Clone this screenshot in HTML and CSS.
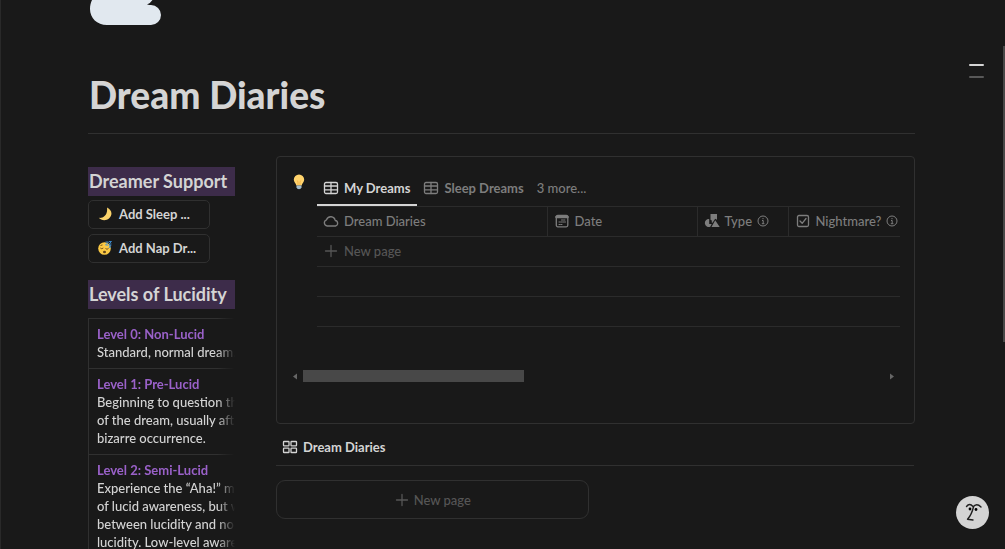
FILE: index.html
```html
<!DOCTYPE html>
<html lang="en">
<head>
<meta charset="utf-8">
<title>Dream Diaries</title>
<link rel="stylesheet" href="styles.css">
</head>
<body>
<main class="page">
  <svg class="page-icon" viewBox="0 0 72 72" aria-hidden="true"><path d="M17 72C7 72 0 65 0 56C0 48 4 42 10 40Q14 26 30 26Q52 28 63 46Q61 50 57 51.500Q60 52 61 52A10 10 0 0 1 61 72Z" fill="#e1e8ef"/></svg>
  <h1 class="title">Dream Diaries</h1>
  <div class="columns">
    <aside class="side">
      <h2 class="side-heading">Dreamer Support</h2>
      <button class="action" type="button">
        <svg class="emoji" viewBox="0 0 14 14" aria-hidden="true"><path d="M9 .5C14 3 15 8 11 11.500C8 14 3 13.500 .8 10.800C5 11.500 10 8 9 .5Z" fill="#fbd36b"/></svg>
        <span>Add Sleep ...</span>
      </button>
      <button class="action" type="button">
        <svg class="emoji" viewBox="0 0 14 14" aria-hidden="true"><circle cx="6.500" cy="7.500" r="6.300" fill="#fbc944"/><path d="M2.300 7q1.500 1.500 3 0M7.500 7.500q1.500 1.500 3 0M2.500 4.500l2-.6" fill="none" stroke="#65471b" stroke-width=".9"/><ellipse cx="6.500" cy="11" rx="1.500" ry="1.300" fill="#65471b"/><path d="M7.500 1h3l-3 3h3M11 .5h2.500L11 3h2.500M11 4.300h2l-2 2h2" fill="none" stroke="#3f91d8" stroke-width=".9"/></svg>
        <span>Add Nap Dr...</span>
      </button>
      <h2 class="side-heading levels-heading">Levels of Lucidity</h2>
      <div class="levels-clip">
        <table class="levels">
          <tr><td><b>Level 0: Non-Lucid</b><br>Standard, normal dream.</td></tr>
          <tr><td><b>Level 1: Pre-Lucid</b><br>Beginning to question the<br>of the dream, usually after<br>bizarre occurrence.</td></tr>
          <tr><td><b>Level 2: Semi-Lucid</b><br>Experience the “Aha!” mo<br>of lucid awareness, but w<br>between lucidity and nor<br>lucidity. Low-level aware</td></tr>
        </table>
      </div>
    </aside>
    <div class="content">
      <section class="callout">
        <svg class="bulb" viewBox="0 0 12 16" aria-hidden="true"><path d="M6 .5A5.200 5.200 0 0 0 .8 5.700C.8 8.200 3 9 3.300 11.500H8.700C9 9 11.200 8.200 11.200 5.700A5.200 5.200 0 0 0 6 .5Z" fill="#ffd36c"/><path d="M5 11V7.500L3.800 6.500M7 11V7.500L8.200 6.500" fill="none" stroke="#f2a93b" stroke-width=".7"/><path d="M3.500 11.500h5v2q-.5 1.700-2.500 1.700t-2.500-1.700Z" fill="#a4bdcb"/></svg>
        <div class="database">
          <nav class="tabs">
            <button class="tab active" type="button"><svg class="icon" viewBox="0 0 16 16" aria-hidden="true"><rect x="1.500" y="2.500" width="13" height="11" rx="1.500"/><path d="M1.500 6h13M1.500 9.800h13M8 2.500v11"/></svg>My Dreams</button>
            <button class="tab" type="button"><svg class="icon" viewBox="0 0 16 16" aria-hidden="true"><rect x="1.500" y="2.500" width="13" height="11" rx="1.500"/><path d="M1.500 6h13M1.500 9.800h13M8 2.500v11"/></svg>Sleep Dreams</button>
            <button class="tab more" type="button">3 more...</button>
          </nav>
          <table class="grid">
            <colgroup><col class="col-name"><col class="col-date"><col class="col-type"><col></colgroup>
            <thead><tr>
              <th><span class="prop"><svg class="icon" viewBox="0 0 16 16" aria-hidden="true"><path d="M4.200 13A3.200 3.200 0 0 1 3.500 6.800A4.500 4.500 0 0 1 12.200 7.500A2.800 2.800 0 0 1 12.500 13Z"/></svg>Dream Diaries</span></th>
              <th><span class="prop"><svg class="icon" viewBox="0 0 16 16" aria-hidden="true"><rect x="2.300" y="2.300" width="11.500" height="11.500" rx="1.500"/><path d="M2.500 4h11" stroke-width="2.600"/><path d="M5 11.500h3M5 9h6.500M7.500 7h4" stroke-width="1" stroke-dasharray="1.300 .8"/></svg>Date</span></th>
              <th><span class="prop"><svg class="icon solid" viewBox="0 0 16 16" aria-hidden="true"><path d="M6.500 1h6.500V6.800L11.200 5.800L8.500 9.800H7.800V7.500L6.500 6.800ZM11.200 7.200L15.700 14H7.500ZM5.200 6A4 4 0 1 0 6.300 13.700L7.700 11H5.200Z"/></svg>Type<svg class="info" viewBox="0 0 12 12" aria-hidden="true"><circle cx="6" cy="6" r="5"/><path d="M5 5.500h1.200V8.500M4.800 8.700h2.600M6 3v1.200"/></svg></span></th>
              <th><span class="prop"><svg class="icon" viewBox="0 0 16 16" aria-hidden="true"><rect x="2.500" y="2.500" width="11" height="11" rx="1.500"/><path d="M5 8l2.200 2.300L11 5.500"/></svg>Nightmare?<svg class="info" viewBox="0 0 12 12" aria-hidden="true"><circle cx="6" cy="6" r="5"/><path d="M5 5.500h1.200V8.500M4.800 8.700h2.600M6 3v1.200"/></svg></span></th>
            </tr></thead>
            <tbody>
              <tr><td colspan="4"><button class="new-row" type="button"><svg class="icon" viewBox="0 0 16 16" aria-hidden="true"><path d="M8 2.500v11M2.500 8h11"/></svg>New page</button></td></tr>
              <tr><td colspan="4"></td></tr>
              <tr><td colspan="4"></td></tr>
            </tbody>
          </table>
        </div>
        <div class="scroller">
          <svg class="arrow" viewBox="0 0 4 6" aria-hidden="true"><path d="M4 0v6L0 3Z"/></svg>
          <div class="track"><div class="thumb"></div></div>
          <svg class="arrow" viewBox="0 0 4 6" aria-hidden="true"><path d="M0 0v6l4-3Z"/></svg>
        </div>
      </section>
      <h3 class="gallery-title"><svg class="icon" viewBox="0 0 16 16" aria-hidden="true"><rect x="1.500" y="2.500" width="5.500" height="4.300" rx=".6"/><rect x="9" y="2.500" width="5.500" height="4.300" rx=".6"/><rect x="1.500" y="9.200" width="5.500" height="4.300" rx=".6"/><rect x="9" y="9.200" width="5.500" height="4.300" rx=".6"/></svg>Dream Diaries</h3>
      <div class="gallery">
        <button class="new-card" type="button"><svg class="icon" viewBox="0 0 16 16" aria-hidden="true"><path d="M8 2.500v11M2.500 8h11"/></svg>New page</button>
      </div>
    </div>
  </div>
</main>
<div class="outline"><i></i><i></i></div>
<div class="page-scroll"></div>
<button class="assistant" type="button" aria-label="Assistant"><svg viewBox="0 0 33 33" aria-hidden="true"><path d="M10.500 10.500Q13.500 6.500 17 10.500M17 11Q20.500 6.500 25 11M17.500 11Q15.500 19 11.500 23.300L17 24" fill="none" stroke="#1f1f1f" stroke-width="1.400" stroke-linecap="round" stroke-linejoin="round"/><circle cx="14" cy="13" r="1.400"/><circle cx="20" cy="13.500" r="1.400"/></svg></button>
</body>
</html>
```

FILE: styles.css
```css
* { box-sizing: border-box; }
body {
  margin: 0;
  height: 100vh;
  overflow: hidden;
  background: #191919;
  border-left: 1px solid #292929;
  color: #d4d4d4;
  font: 500 13px/18px Lato, "Open Sans", sans-serif;
}
button { font: inherit; color: inherit; background: none; border: 0; padding: 0; text-align: left; }
svg { display: block; flex: none; }
.page { padding: 0 90px 0 87px; }
.page-icon { width: 72px; height: 72px; margin: -47px 0 0 2px; }
.title {
  margin: 0;
  padding: 46px 1px 14px;
  border-bottom: 1px solid #303030;
  font-size: 37px;
  line-height: 48px;
  font-weight: 900;
}
.columns { display: flex; gap: 41px; padding-top: 22px; }
.side { flex: none; width: 147px; padding-top: 11px; }
.side-heading {
  margin: 0 0 4px;
  padding: 0 1px;
  background: #3d2c4a;
  font-size: 18px;
  line-height: 29px;
  font-weight: 700;
  white-space: nowrap;
}
.action {
  display: flex;
  align-items: center;
  gap: 7px;
  width: 122px;
  height: 29px;
  margin-bottom: 5px;
  padding: 0 10px 1px 9px;
  border: 1px solid #303030;
  border-radius: 5px;
  font-weight: 700;
  white-space: nowrap;
}
.emoji { width: 14px; height: 14px; }
.levels-heading { margin: 17px 0 9px; }
.levels-clip { overflow: hidden; mask-image: linear-gradient(90deg, #000 88%, transparent); }
.levels { width: 240px; border-collapse: collapse; white-space: nowrap; }
.levels td { padding: 6px 8px 7px; border: 1px solid #303030; }
.levels b { color: #9a61c9; font-weight: 700; }
.content { flex: 1; min-width: 0; }
.callout {
  position: relative;
  padding: 12px 14px 41px 40px;
  border: 1px solid #303030;
  border-radius: 4px;
}
.bulb { position: absolute; left: 16px; top: 17px; width: 12px; height: 16px; }
.tabs { display: flex; height: 37px; }
.tab { display: flex; align-items: center; gap: 5px; padding: 0 7px 0 6px; color: #7d7d7d; font-weight: 700; }
.tab.active { color: #d4d4d4; border-bottom: 2px solid #d4d4d4; padding-top: 2px; }
.tab.more { font-weight: 500; }
.icon { width: 16px; height: 16px; fill: none; stroke: currentColor; stroke-width: 1.3; stroke-linecap: round; stroke-linejoin: round; }
.icon.solid { fill: currentColor; stroke: none; }
.grid { width: 100%; table-layout: fixed; border-collapse: collapse; color: #7d7d7d; }
.col-name { width: 230px; }
.col-date { width: 150px; }
.col-type { width: 91px; }
.grid th, .grid td { height: 30px; padding: 0 0 1px; border-top: 1px solid #2b2b2b; border-bottom: 1px solid #2b2b2b; text-align: left; font-weight: 500; }
.grid th + th { border-left: 1px solid #2b2b2b; }
.prop, .new-row { display: flex; align-items: center; gap: 5px; padding-left: 6px; white-space: nowrap; }
.new-row { color: #565656; }
.info { width: 12px; height: 12px; fill: none; stroke: currentColor; stroke-width: 1; }
.scroller { display: flex; align-items: center; gap: 6px; margin: 43px 6px 0 -24px; }
.arrow { width: 4px; height: 7px; fill: #666; }
.track { flex: 1; }
.thumb { width: 38%; height: 12px; background: #484848; }
.gallery-title {
  display: flex;
  align-items: center;
  gap: 5px;
  height: 42px;
  margin: 0 1px 14px 0;
  padding: 5px 6px 0;
  border-bottom: 1px solid #303030;
  font-size: 13px;
  font-weight: 700;
}
.gallery { display: grid; grid-template-columns: 1fr 1fr; gap: 14px; }
.new-card {
  display: flex;
  align-items: center;
  justify-content: center;
  gap: 4px;
  height: 39px;
  border: 1px solid #303030;
  border-radius: 9px;
  color: #565656;
}
.outline { position: fixed; right: 21px; top: 64px; display: grid; gap: 10px; }
.outline i { width: 15px; height: 2px; border-radius: 1px; background: #d4d4d4; }
.outline i + i { background: #585858; }
.page-scroll { position: fixed; right: 0; top: 46px; width: 2px; height: 54vh; background: #484848; }
.assistant { position: fixed; right: 16px; bottom: 20px; width: 33px; height: 33px; border-radius: 50%; background: #d4d4d4; }
```
